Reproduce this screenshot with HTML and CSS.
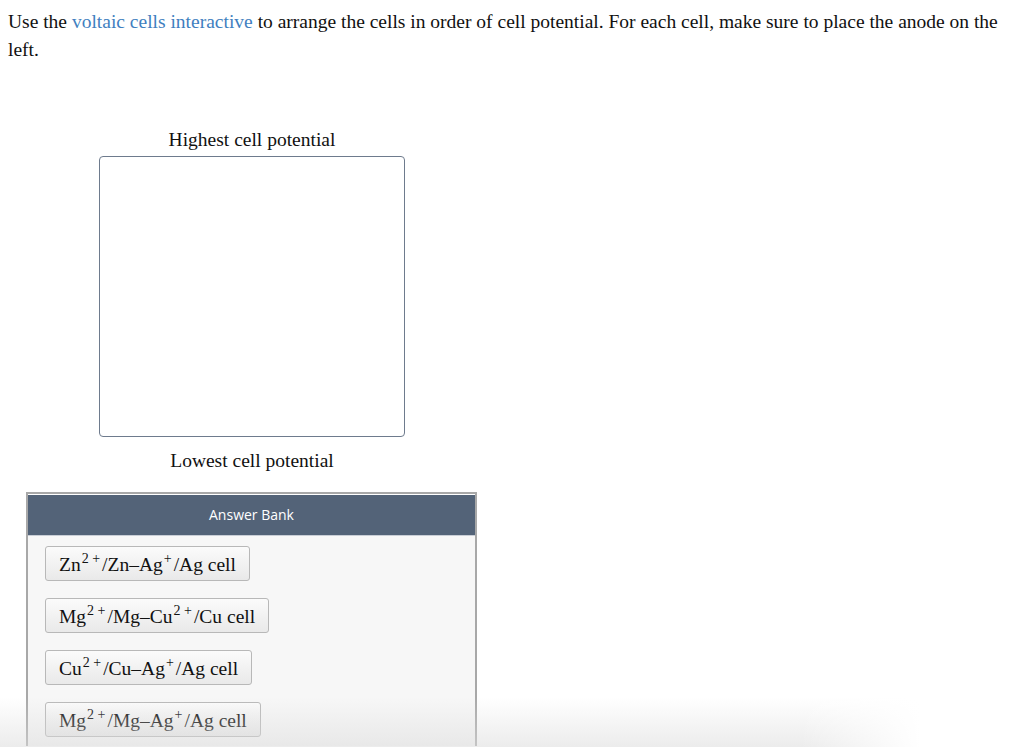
FILE: index.html
```html
<!DOCTYPE html>
<html>
<head>
<meta charset="utf-8">
<link rel="stylesheet" href="styles.css">
</head>
<body>
<p class="prompt">Use the <span class="link">voltaic cells interactive</span> to arrange the cells in order of cell potential. For each cell, make sure to place the anode on the left.</p>
<div class="sorter">
  <div class="label top">Highest cell potential</div>
  <div class="dropzone"></div>
  <div class="label bottom">Lowest cell potential</div>
</div>
<div class="bank">
  <div class="bank-head">Answer Bank</div>
  <div class="bank-body">
    <div class="chip">Zn<sup>2 +</sup>/Zn–Ag<sup>+</sup>/Ag cell</div>
    <div class="chip">Mg<sup>2 +</sup>/Mg–Cu<sup>2 +</sup>/Cu cell</div>
    <div class="chip">Cu<sup>2 +</sup>/Cu–Ag<sup>+</sup>/Ag cell</div>
    <div class="chip">Mg<sup>2 +</sup>/Mg–Ag<sup>+</sup>/Ag cell</div>
  </div>
</div>
<div class="fade"></div>
</body>
</html>
```
FILE: styles.css
```css
html, body {
  margin: 0;
  padding: 0;
  background: #fff;
  overflow: hidden;
}
body {
  font-family: "Liberation Serif", "Times New Roman", serif;
  color: #111;
  height: 747px;
  position: relative;
}
.prompt {
  margin: 8px 0 0 8px;
  padding-right: 16px;
  font-size: 19.5px;
  line-height: 28px;
}
.link {
  color: #3f7fc0;
}
.sorter {
  width: 306px;
  margin: 65px 0 0 99px;
  display: flex;
  flex-direction: column;
  align-items: center;
}
.label {
  font-size: 19.5px;
  line-height: 22px;
}
.label.top {
  margin-bottom: 5px;
}
.label.bottom {
  margin-top: 13px;
}
.dropzone {
  width: 304px;
  height: 279px;
  border: 1px solid #6e7b8d;
  border-radius: 4px;
}
.bank {
  width: 447px;
  margin: 20px 0 0 26px;
  border: 2px solid #a8a8a8;
  border-bottom: none;
  background: #f7f7f7;
  height: 252px;
  overflow: hidden;
}
.bank-head {
  background: #536378;
  border-top: 1px solid #fff;
  border-bottom: 1px solid #c9ced6;
  height: 40px;
  line-height: 40px;
  color: #fff;
  text-align: center;
  font-family: "Open Sans", sans-serif;
  font-size: 14px;
}
.bank-body {
  padding: 10px 0 0 17px;
  display: flex;
  flex-direction: column;
  align-items: flex-start;
  gap: 17px;
}
.chip {
  font-size: 19.5px;
  height: 33px;
  line-height: 35px;
  padding: 0 13px;
  border: 1px solid #b8b8b8;
  border-radius: 3px;
  background: linear-gradient(#fbfbfb, #e9e9e9);
  color: #111;
}
.chip sup {
  font-size: 14px;
  line-height: 0;
  vertical-align: 8px;
  margin: 0 2px 0 1px;
  white-space: pre;
}
.fade {
  position: absolute;
  left: 0;
  bottom: 0;
  width: 1024px;
  height: 50px;
  background:
    linear-gradient(90deg, rgba(255,255,255,0) 0px, rgba(255,255,255,0) 800px, rgba(255,255,255,1) 920px),
    linear-gradient(rgba(220,220,220,0), rgba(220,220,220,0.55));
  pointer-events: none;
}
```
